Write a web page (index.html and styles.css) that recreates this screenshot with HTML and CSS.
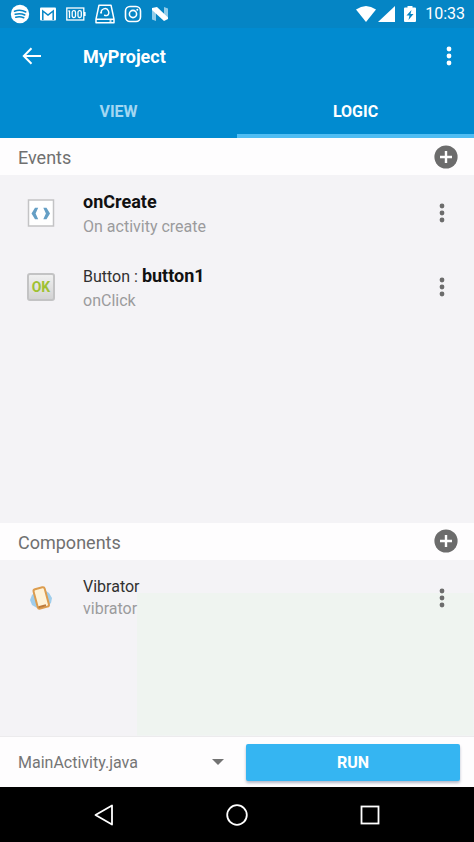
FILE: index.html
```html
<!DOCTYPE html>
<html lang="en">
<head>
<meta charset="utf-8">
<meta name="viewport" content="width=device-width, initial-scale=1">
<title>MyProject</title>
<link rel="stylesheet" href="styles.css">
</head>
<body>
<svg class="defs" aria-hidden="true">
  <symbol id="more" viewBox="0 0 6 20"><circle cx="3" cy="3" r="2.4"/><circle cx="3" cy="10" r="2.4"/><circle cx="3" cy="17" r="2.4"/></symbol>
  <symbol id="add" viewBox="0 0 24 24"><circle cx="12" cy="12" r="11.6" fill="#6c6c6c"/><path d="M12 6v12M6 12h12" stroke="#fff" stroke-width="2.4"/></symbol>
</svg>
<header class="app-header">
  <div class="status">
    <svg width="20" height="20" viewBox="0 0 20 20"><circle cx="10" cy="10" r="9.2" fill="#fff"/><path d="M4.500 7.200Q10.500 5.200 15.800 8M5.200 10.300Q10.500 8.700 14.800 11M5.800 13.200Q10 12 13.800 13.800" fill="none" stroke="#0585c5" stroke-width="1.5" stroke-linecap="round"/></svg>
    <svg width="18" height="20" viewBox="0 0 18 20"><rect x="1" y="3.500" width="16" height="13" rx="1" fill="#fff"/><path d="M3.800 16V7L9 11L14.200 7V16" fill="none" stroke="#0585c5" stroke-width="1.500"/></svg>
    <svg width="20" height="20" viewBox="0 0 20 20"><rect x=".8" y="4" width="17" height="12" fill="none" stroke="#fff" stroke-width="1.300"/><path d="M18 8h1.600v4H18" fill="#fff"/><path d="M3.500 6.500v7.500M2.500 7.500l1-1" fill="none" stroke="#fff" stroke-width="1.300"/><rect x="6.200" y="6.700" width="3.300" height="6.800" rx="1.500" fill="none" stroke="#fff" stroke-width="1.300"/><rect x="12" y="6.700" width="3.300" height="6.800" rx="1.500" fill="none" stroke="#fff" stroke-width="1.300"/></svg>
    <svg width="20" height="20" viewBox="0 0 20 20"><path d="M4 1.200h12l3 14v3.500H1v-3.500zM1 15.200h18" fill="none" stroke="#fff" stroke-width="1.500" stroke-linejoin="round"/><path d="M6.500 9.500a3.700 3.700 0 1 1 5.200 2.200M6.500 9.500l-1-1.500M11.700 11.700l-2.700-.5M14.500 17h2" fill="none" stroke="#fff" stroke-width="1.400"/></svg>
    <svg width="18" height="20" viewBox="0 0 18 20"><rect x="1.500" y="2.500" width="15" height="15" rx="4.500" fill="none" stroke="#fff" stroke-width="1.600"/><circle cx="9" cy="10" r="3.600" fill="none" stroke="#fff" stroke-width="1.600"/><circle cx="13.300" cy="5.700" r="1" fill="#fff"/></svg>
    <svg width="18" height="20" viewBox="0 0 18 20"><path d="M1 4v11.500l4 1.500V7zM13 3l4 1.500V15l-4-4z" fill="#91cce9"/><path d="M1 4l5-1L17 13.500V15l-4 2L1 6z" fill="#fff"/></svg>
    <div class="status-right">
      <svg width="20" height="18" viewBox="0 0 20 18"><path d="M0 4.500Q10-2.500 20 4.500L10 17z" fill="#fff"/></svg>
      <svg width="17" height="18" viewBox="0 0 17 18"><path d="M17 1v16H0z" fill="#fff"/></svg>
      <svg class="battery" width="12" height="18" viewBox="0 0 12 18"><path d="M3.500 1h5v1.500H11q1 0 1 1V16q0 1-1 1H1q-1 0-1-1V3.500q0-1 1-1h2.500z" fill="#fff"/><path d="M7.500 5L2.500 10.500h3L4.500 15l5-6h-3z" fill="#0585c5"/></svg>
      <span>10:33</span>
    </div>
  </div>
  <div class="toolbar">
    <button class="icon-btn" aria-label="Back"><svg width="20" height="18" viewBox="0 0 20 18"><path d="M19 9H2M9.500 1.200L1.800 9l7.700 7.800" fill="none" stroke="#fff" stroke-width="2"/></svg></button>
    <h1>MyProject</h1>
    <button class="icon-btn menu" aria-label="Menu"><svg class="more"><use href="#more"/></svg></button>
  </div>
  <nav class="tabs">
    <a href="#view">VIEW</a>
    <a href="#logic" class="active" aria-current="page">LOGIC</a>
  </nav>
</header>
<main>
  <div class="section-head"><h2>Events</h2><button class="icon-btn" aria-label="Add event"><svg class="add"><use href="#add"/></svg></button></div>
  <ul class="list events">
    <li>
      <svg width="28" height="28" viewBox="0 0 28 28"><rect x="1.500" y="1" width="25" height="26" fill="#fff" stroke="#c3c3c5" stroke-width="1.500"/><path d="M8 8.800h3.200L8.600 14.500l2.600 5.700H8L4.500 14.500zM19.500 8.800h-3.200l2.600 5.700-2.600 5.700h3.200l3.500-5.700z" fill="#659fc5"/></svg>
      <div class="text"><p class="title"><b>onCreate</b></p><p class="sub">On activity create</p></div>
      <button class="icon-btn" aria-label="onCreate options"><svg class="more"><use href="#more"/></svg></button>
    </li>
    <li>
      <span class="ok-icon">OK</span>
      <div class="text"><p class="title">Button : <b>button1</b></p><p class="sub">onClick</p></div>
      <button class="icon-btn" aria-label="button1 options"><svg class="more"><use href="#more"/></svg></button>
    </li>
  </ul>
  <div class="section-head"><h2>Components</h2><button class="icon-btn" aria-label="Add component"><svg class="add"><use href="#add"/></svg></button></div>
  <ul class="list components">
    <li>
      <svg width="28" height="28" viewBox="0 0 28 28"><path d="M8 8l-3 3-2 5 2 5 5 3zM19 7l3 2 3 5-1 5-5 4z" fill="#9fcdec"/><rect x="8.500" y="4" width="11.500" height="20" rx="2" fill="#fff3d8" stroke="#dc9c4e" stroke-width="2" transform="rotate(-15 14 14)"/><path d="M11.500 23.300l7.500-2" stroke="#bd7b3c" stroke-width="2"/></svg>
      <div class="text"><p class="title">Vibrator</p><p class="sub">vibrator</p></div>
      <button class="icon-btn" aria-label="Vibrator options"><svg class="more"><use href="#more"/></svg></button>
    </li>
  </ul>
</main>
<footer class="run-bar">
  <div class="file">
    <select aria-label="File"><option>MainActivity.java</option></select>
    <svg width="12" height="6" viewBox="0 0 12 6"><path d="M0 0h12L6 6z" fill="#737373"/></svg>
  </div>
  <button class="run">RUN</button>
</footer>
<nav class="system-nav" aria-label="System">
  <button class="icon-btn" aria-label="Back"><svg width="20" height="22" viewBox="0 0 20 22"><path d="M18 1.500v19L1.500 11z" fill="none" stroke="#fff" stroke-width="1.800" stroke-linejoin="round"/></svg></button>
  <button class="icon-btn" aria-label="Home"><svg width="22" height="22" viewBox="0 0 22 22"><circle cx="11" cy="11" r="9.800" fill="none" stroke="#fff" stroke-width="1.800"/></svg></button>
  <button class="icon-btn" aria-label="Recent apps"><svg width="20" height="20" viewBox="0 0 20 20"><rect x="1.500" y="1.500" width="17" height="17" fill="none" stroke="#fff" stroke-width="1.800"/></svg></button>
</nav>
</body>
</html>
```
FILE: styles.css
```css
* { box-sizing: border-box; }
body {
  margin: 0;
  min-height: 100vh;
  display: flex;
  flex-direction: column;
  background: #fefdfe;
  font-family: Roboto, "Liberation Sans", sans-serif;
  font-size: 16px;
  color: #303030;
}
h1, h2, p, ul { margin: 0; padding: 0; }
svg { display: block; flex: none; }
.defs { position: absolute; width: 0; height: 0; }
.icon-btn {
  display: flex;
  flex: none;
  align-items: center;
  justify-content: center;
  padding: 0;
  border: 0;
  background: none;
  color: #6c6c6c;
  cursor: pointer;
}
.more { width: 6px; height: 20px; fill: currentColor; }
.add { width: 24px; height: 24px; }

.app-header { background: #018bd0; color: #fff; }
.status {
  display: flex;
  align-items: center;
  gap: 9px;
  height: 28px;
  padding: 0 9px 0 10px;
  background: #0585c5;
}
.status-right {
  display: flex;
  align-items: center;
  gap: 2px;
  margin-left: auto;
  line-height: 28px;
}
.battery { margin: 0 7px; }
.toolbar {
  display: flex;
  align-items: center;
  height: 56px;
  padding: 0 22px;
}
.toolbar h1 { flex: 1; margin-left: 41px; font-size: 18px; font-weight: 700; }
.toolbar .menu { color: #fff; }
.tabs { display: grid; grid-template-columns: 1fr 1fr; height: 54px; }
.tabs a {
  display: flex;
  align-items: center;
  justify-content: center;
  border-top: 4px solid transparent;
  border-bottom: 4px solid transparent;
  color: #a2d7f2;
  font-weight: 700;
  text-decoration: none;
}
.tabs .active { color: #fff; border-bottom-color: #4fbdf3; }

main { flex: 1; display: flex; flex-direction: column; }
.section-head {
  display: flex;
  align-items: center;
  justify-content: space-between;
  height: 37px;
  padding: 0 16px 0 18px;
}
.section-head h2 { padding-top: 2px; font-size: 18px; font-weight: 400; color: #707070; }
.list { list-style: none; padding-top: 1px; background: #f4f3f6; }
.list li {
  display: flex;
  align-items: center;
  height: 74px;
  padding: 0 29px 0 27px;
}
.events { flex: 348 0 0; }
.components {
  flex: 176 0 0;
  background: linear-gradient(#eff4f0, #eff4f0) right bottom / 71% 81% no-repeat #f4f3f6;
}
.text { flex: 1; margin-left: 28px; padding-top: 3px; }
.title, .sub { line-height: 24px; }
.title b { font-size: 18px; color: #111; }
.sub { color: #9b9b9d; }
.components .title, .components .sub { line-height: 22px; }
.components .text { padding-top: 1px; }
.ok-icon {
  width: 28px;
  height: 28px;
  border: 2px solid #c3c3c4;
  border-radius: 3px;
  background: linear-gradient(#f0f0f0, #d3d3d4);
  color: #9fc133;
  font-size: 14px;
  font-weight: 700;
  line-height: 24px;
  text-align: center;
}

.run-bar {
  display: flex;
  align-items: center;
  height: 51px;
  padding: 0 14px 0 18px;
  border-top: 1px solid #ecebed;
}
.file { display: flex; flex: 228 0 0; align-items: center; }
.file select {
  flex: 1;
  min-width: 0;
  appearance: none;
  padding: 0;
  border: 0;
  background: none;
  font: inherit;
  color: #757575;
}
.file svg { margin-right: 22px; }
.run {
  flex: 214 0 0;
  height: 37px;
  padding: 0;
  border: 0;
  border-radius: 2px;
  background: #35b5f2;
  box-shadow: 0 2px 3px #b4b8c8;
  color: #fff;
  font: 700 16px Roboto, "Liberation Sans", sans-serif;
}
.system-nav {
  display: flex;
  align-items: center;
  justify-content: center;
  gap: 112px;
  height: 55px;
  background: #000;
}
```
